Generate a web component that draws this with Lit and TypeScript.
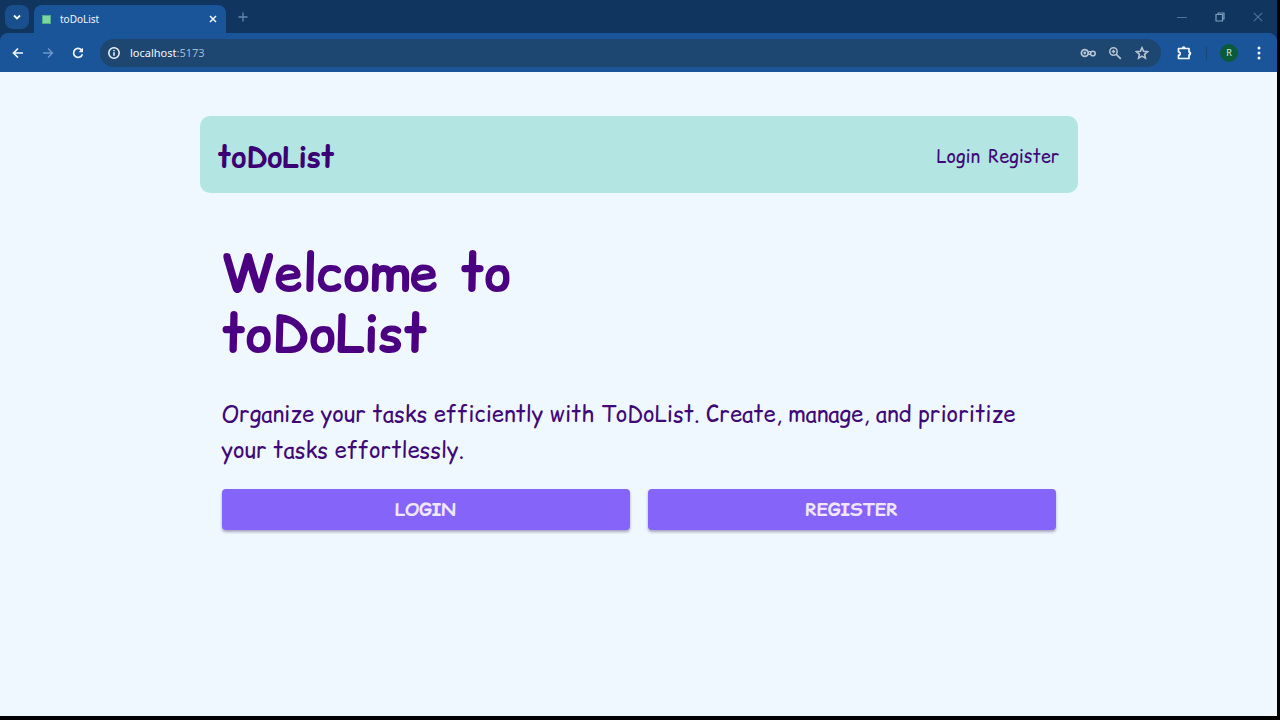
import { LitElement, html, css } from "lit";
import { customElement } from "lit/decorators.js";

@customElement("browser-chrome")
class BrowserChrome extends LitElement {
  static styles = css`
    :host { display: block; font: 11px/16px "Noto Sans", "Open Sans", sans-serif; color: #f2f7ff; background: #10365f; }
    button { border: 0; padding: 0; margin: 0; background: none; color: inherit; font: inherit; display: grid; place-items: center; }
    svg { display: block; fill: none; stroke: currentColor; stroke-width: 2; }
    .strip { display: flex; align-items: flex-start; height: 33px; padding: 0 0 0 4px; }
    .search { width: 24px; height: 24px; margin: 5px 5px 0 1px; border-radius: 8px; background: #1a4f8e; }
    .tab { display: flex; align-items: center; width: 192px; height: 28px; box-sizing: border-box; margin-top: 5px; padding: 0 8px; border-radius: 8px 8px 0 0; background: #1a5599; }
    .fav { width: 9px; height: 9px; margin-right: 9px; background: #7fd6a2; border: 1px solid #4fae88; box-sizing: border-box; }
    .title { flex: 1; font-size: 10px; line-height: 14px; }
    .plus { width: 34px; height: 33px; color: #6388b4; }
    .controls { display: flex; margin-left: auto; height: 33px; color: #50739d; }
    .controls button { width: 38px; height: 33px; }
    .bar { display: flex; align-items: center; height: 39px; box-sizing: border-box; padding: 1px 3px 0; background: #1a5599; border-radius: 8px 8px 0 0; }
    .nav { width: 30px; height: 30px; }
    .dim { color: #6c97cb; }
    .omni { display: flex; flex: 1; align-items: center; height: 28px; margin: 0 8px 0 7px; padding: 0 6px 0 7px; border-radius: 14px; background: #1d4671; }
    .url { flex: 1; display: flex; margin-left: 9px; }
    .url b { font-weight: 400; }
    .url span { color: #a3b8d1; }
    .act { width: 27px; height: 28px; color: #b7c4d3; }
    .ext { width: 30px; height: 30px; }
    .sep { width: 1px; height: 14px; margin: 0 13px 0 7px; background: #174679; }
    .avatar { width: 18px; height: 18px; margin-right: 6px; border-radius: 9px; background: #0b5a3c; font-size: 9px; color: #d6efdf; }
    .menu { width: 30px; height: 30px; }
  `;
  render() {
    return html`
      <div class="strip">
        <button class="search" aria-label="Search tabs"><svg width="10" height="10" viewBox="0 0 10 10"><path d="M2 3.5l3 3 3-3" stroke-width="1.8" /></svg></button>
        <div class="tab">
          <i class="fav"></i><span class="title">toDoList</span>
          <button aria-label="Close tab"><svg width="10" height="10" viewBox="0 0 10 10"><path d="M2 2l6 6M8 2l-6 6" stroke-width="1.5" /></svg></button>
        </div>
        <button class="plus" aria-label="New tab"><svg width="10" height="10" viewBox="0 0 10 10"><path d="M5 .5v9M.5 5h9" stroke-width="1.3" /></svg></button>
        <div class="controls">
          <button aria-label="Minimize"><svg width="10" height="10" viewBox="0 0 10 10"><path d="M0 5.5h10" stroke-width="1" /></svg></button>
          <button aria-label="Restore"><svg width="10" height="10" viewBox="0 0 10 10"><path d="M1 2.5h6.5V9H1zM3 2.5V1h6v6H7.5" stroke="#7f9dc0" stroke-width="1.2" /></svg></button>
          <button aria-label="Close"><svg width="10" height="10" viewBox="0 0 10 10"><path d="M.8.8l8.4 8.4M9.2.8L.8 9.2" stroke-width="1.1" /></svg></button>
        </div>
      </div>
      <div class="bar">
        <button class="nav" aria-label="Back"><svg width="12" height="12" viewBox="0 0 12 12"><path d="M11 6H2M6 1.5L1.5 6 6 10.5" stroke-width="1.7" /></svg></button>
        <button class="nav dim" aria-label="Forward"><svg width="12" height="12" viewBox="0 0 12 12"><path d="M1 6h9M6 1.5L10.5 6 6 10.5" stroke-width="1.4" /></svg></button>
        <button class="nav" aria-label="Reload"><svg width="12" height="12" viewBox="0 0 12 12"><path d="M9.8 3.3A4.5 4.5 0 1 0 10.4 7.2" stroke-width="1.7" /><path d="M11 .8v4.4H6.6z" fill="currentColor" stroke="none" /></svg></button>
        <div class="omni">
          <svg width="14" height="14" viewBox="0 0 14 14"><circle cx="7" cy="7" r="5.2" stroke-width="1.5" /><path d="M7 6.2v3.6M7 3.9v1.4" stroke-width="1.5" /></svg>
          <div class="url"><b>localhost</b><span>:5173</span></div>
          <button class="act" aria-label="Passwords"><svg width="16" height="12" viewBox="0 0 16 12"><circle cx="4.8" cy="6" r="3.4" stroke-width="1.8" /><circle cx="4.8" cy="6" r="1.4" fill="currentColor" stroke="none" /><path d="M7.8 4.6h4M7.8 7.2h3.2" stroke-width="1.4" /><circle cx="12.9" cy="6.5" r="2.3" stroke-width="1.6" /></svg></button>
          <button class="act" aria-label="Zoom"><svg width="14" height="14" viewBox="0 0 14 14"><circle cx="5.5" cy="5.5" r="3.7" stroke-width="1.5" /><path d="M8.3 8.3l4.5 4.5" stroke-width="1.7" /><path d="M5.5 3.8v3.4M3.8 5.5h3.4" stroke-width="1.4" /></svg></button>
          <button class="act" aria-label="Bookmark"><svg width="14" height="14" viewBox="0 0 14 14"><path d="M7 1.7l1.6 3.6 3.9.4-2.9 2.6.8 3.8L7 10.1l-3.4 2 .8-3.8L1.5 5.7l3.9-.4z" stroke-width="1.6" /></svg></button>
        </div>
        <button class="ext" aria-label="Extensions"><svg width="16" height="16" viewBox="0 0 16 16"><path d="M2.5 3.5H13V7a1.3 1.3 0 0 1 0 2.8v3.7H2.500v-3.300a1.700 1.700 0 0 0 0-3.400z" stroke-width="1.7" stroke-linejoin="round" /><path d="M5.900 3a1.800 1.800 0 0 1 3.600 0zM13 6.600a1.800 1.800 0 0 1 0 3.600z" fill="currentColor" stroke="none" /></svg></button>
        <i class="sep"></i>
        <button class="avatar" aria-label="Profile">R</button>
        <button class="menu" aria-label="Menu"><svg width="4" height="14" viewBox="0 0 4 14"><g fill="currentColor" stroke="none"><circle cx="2" cy="2" r="1.5" /><circle cx="2" cy="7" r="1.5" /><circle cx="2" cy="12" r="1.5" /></g></svg></button>
      </div>`;
  }
}

@customElement("app-root")
class AppRoot extends LitElement {
  static styles = css`
    :host { display: flex; flex-direction: column; min-height: 100vh; box-sizing: border-box; border: solid #000; border-width: 0 3px 4px 0; background: #f0f8ff; color: #3f0a78; font-family: "Comic Sans MS", "Comic Relief", "Comic Neue", "DejaVu Sans", sans-serif; font-variant-ligatures: none; }
    a { color: inherit; text-decoration: none; }
    .page { width: 100%; max-width: 878px; margin: 0 auto; padding: 44px 16px; }
    .navbar { display: flex; align-items: center; justify-content: space-between; padding: 20px 18px 16px; border-radius: 10px; background: #b3e5e3; }
    .brand { font-size: 29px; line-height: 41px; font-weight: 700; color: #3b0073; }
    .links { display: flex; gap: 8px; font-size: 18px; line-height: 24px; }
    .hero { padding: 49px 22px 0; }
    h1 { max-width: 380px; margin: 0 0 32px; font-size: 51px; line-height: 61px; font-weight: 700; color: #4b0082; }
    p { margin: 0 0 21px; font-size: 22px; line-height: 36px; }
    .actions { display: grid; grid-template-columns: 1fr 1fr; gap: 18px; }
    .actions button { height: 41px; padding: 0; border: 0; border-radius: 4px; background: #8464f9; color: #f0e6ff; font-family: inherit; font-size: 18px; line-height: 24px; font-weight: 700; text-transform: uppercase; box-shadow: 0 2px 3px rgba(50, 40, 90, 0.4); }
  `;
  render() {
    return html`
      <browser-chrome></browser-chrome>
      <main class="page">
        <nav class="navbar">
          <a class="brand" href="#">toDoList</a>
          <div class="links"><a href="#login">Login</a><a href="#register">Register</a></div>
        </nav>
        <section class="hero">
          <h1>Welcome to toDoList</h1>
          <p>Organize your tasks efficiently with ToDoList. Create, manage, and prioritize your tasks effortlessly.</p>
          <div class="actions"><button>Login</button><button>Register</button></div>
        </section>
      </main>`;
  }
}
